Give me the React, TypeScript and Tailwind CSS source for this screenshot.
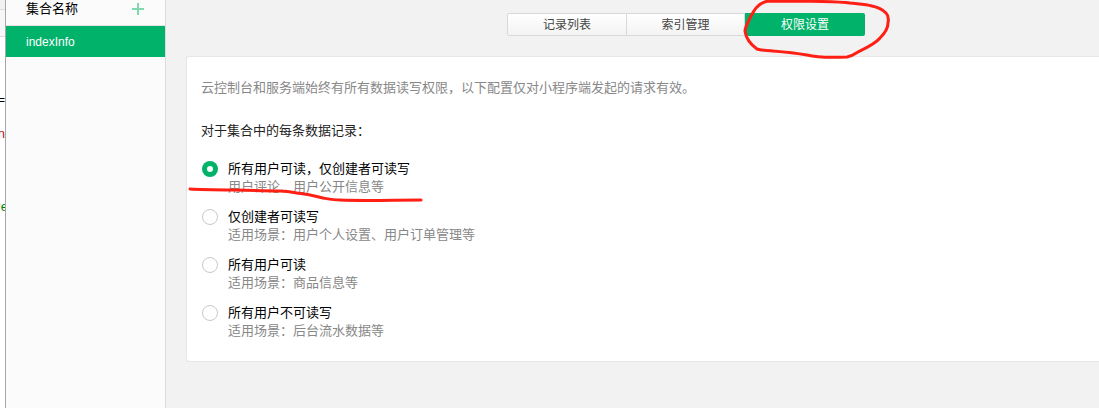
const options = [
  { title: "所有用户可读，仅创建者可读写", desc: "用户评论、用户公开信息等", checked: true },
  { title: "仅创建者可读写", desc: "适用场景：用户个人设置、用户订单管理等", checked: false },
  { title: "所有用户可读", desc: "适用场景：商品信息等", checked: false },
  { title: "所有用户不可读写", desc: "适用场景：后台流水数据等", checked: false },
];

export default function App() {
  return (
    <div
      className="relative flex h-[408px] w-[1099px] overflow-hidden bg-[#f2f2f2] text-[13px]"
      style={{ fontFamily: '"Liberation Sans", "Noto Sans CJK SC", sans-serif' }}
    >
      {/* sliver of the window behind */}
      <div className="relative flex w-[6px] shrink-0 flex-col overflow-hidden border-r border-[#a8a8a8] bg-white">
        <div className="h-[10px] border-b border-[#ddd] bg-[#f2f2f2]" />
        <div className="h-[27px] border-b border-[#ddd] bg-[#f7f7f7]" />
        <span className="absolute right-0 top-[91px] leading-[17px] text-black">=</span>
        <span className="absolute right-0 top-[125px] leading-[17px] text-[#c01515]">n</span>
        <span className="absolute right-[-3px] top-[198px] leading-[17px] text-[#008000]">Pe</span>
      </div>

      <aside className="w-[160px] shrink-0 border-r border-[#dcdcdc] bg-[#fbfbfb]">
        <div className="flex h-[26px] items-center justify-between border-b border-[#e4e4e4] pb-[8px] pl-[20px] pr-[21px] text-black">
          <span>集合名称</span>
          <svg width="12" height="12" viewBox="0 0 12 12">
            <path d="M6 0v12M0 6h12" stroke="#7fdab0" strokeWidth="2" />
          </svg>
        </div>
        <div className="flex h-[31px] items-center bg-[#00b26a] pl-[20px] text-[12px] text-white">indexInfo</div>
      </aside>

      <main className="flex min-w-0 flex-1 flex-col pl-[20px]">
        <div className="flex h-[56px] shrink-0 pl-[321px] pt-[13px]">
          <div className="flex h-[23px] text-[12px] text-[#444]">
            <div className="flex w-[120px] items-center justify-center rounded-l-[2px] border border-[#d9d9d9] bg-gradient-to-b from-white to-[#f3f3f3]">
              记录列表
            </div>
            <div className="flex w-[118px] items-center justify-center border-y border-r border-[#d9d9d9] bg-gradient-to-b from-white to-[#f3f3f3]">
              索引管理
            </div>
            <div className="flex w-[120px] items-center justify-center rounded-r-[2px] bg-[#00b26a] text-white">
              权限设置
            </div>
          </div>
        </div>

        <section className="h-[306px] rounded-l-[3px] border-y border-l border-[#e6e6e6] bg-white pl-[14px] pt-[22px]">
          <p className="leading-[17px] text-[#888]">云控制台和服务端始终有所有数据读写权限，以下配置仅对小程序端发起的请求有效。</p>
          <p className="mt-[26px] leading-[17px] text-[#222]">对于集合中的每条数据记录：</p>
          <div className="ml-[1px] mt-[21px] flex flex-col gap-[13px]">
            {options.map((o) => (
              <div key={o.title} className="flex">
                <div className="mr-[10px] mt-[1px] h-[16px] w-[16px] shrink-0">
                  {o.checked ? (
                    <div className="flex h-[16px] w-[16px] items-center justify-center rounded-full bg-[#00b26a]">
                      <div className="h-[6px] w-[6px] rounded-full bg-white" />
                    </div>
                  ) : (
                    <div className="h-[16px] w-[16px] rounded-full border border-[#c8c8c8] bg-white" />
                  )}
                </div>
                <div>
                  <div className="leading-[17px] text-black">{o.title}</div>
                  <div className="mt-[1px] leading-[17px] text-[#888]">{o.desc}</div>
                </div>
              </div>
            ))}
          </div>
        </section>
      </main>

      {/* red marker strokes drawn over the screenshot */}
      <svg className="pointer-events-none absolute inset-0" width="1099" height="408" viewBox="0 0 1099 408" fill="none">
        <path
          d="M850 3C835 1 800 1 768 1C758 3 754 10 750 18C747 24 745 28 745 31C746 38 750 44 757 49C762 51 768 50 773 51C785 52 795 53 807 55C815 57 825 58 847 57C852 56 855 54 858 52C866 48 875 44 880 38C885 33 888 28 888 23C889 18 888 15 886 13C882 9 877 7 872 6C865 4 858 4 850 3"
          stroke="#ff1f14"
          strokeWidth="3"
          strokeLinecap="round"
        />
        <path
          d="M190 189C210 190 250 190 280 191C288 191 292 192 297 193C306 194 315 196 323 198C329 199 334 200 340 200C365 201 395 200 421 200"
          stroke="#ff1f14"
          strokeWidth="3"
          strokeLinecap="round"
        />
      </svg>
    </div>
  );
}
